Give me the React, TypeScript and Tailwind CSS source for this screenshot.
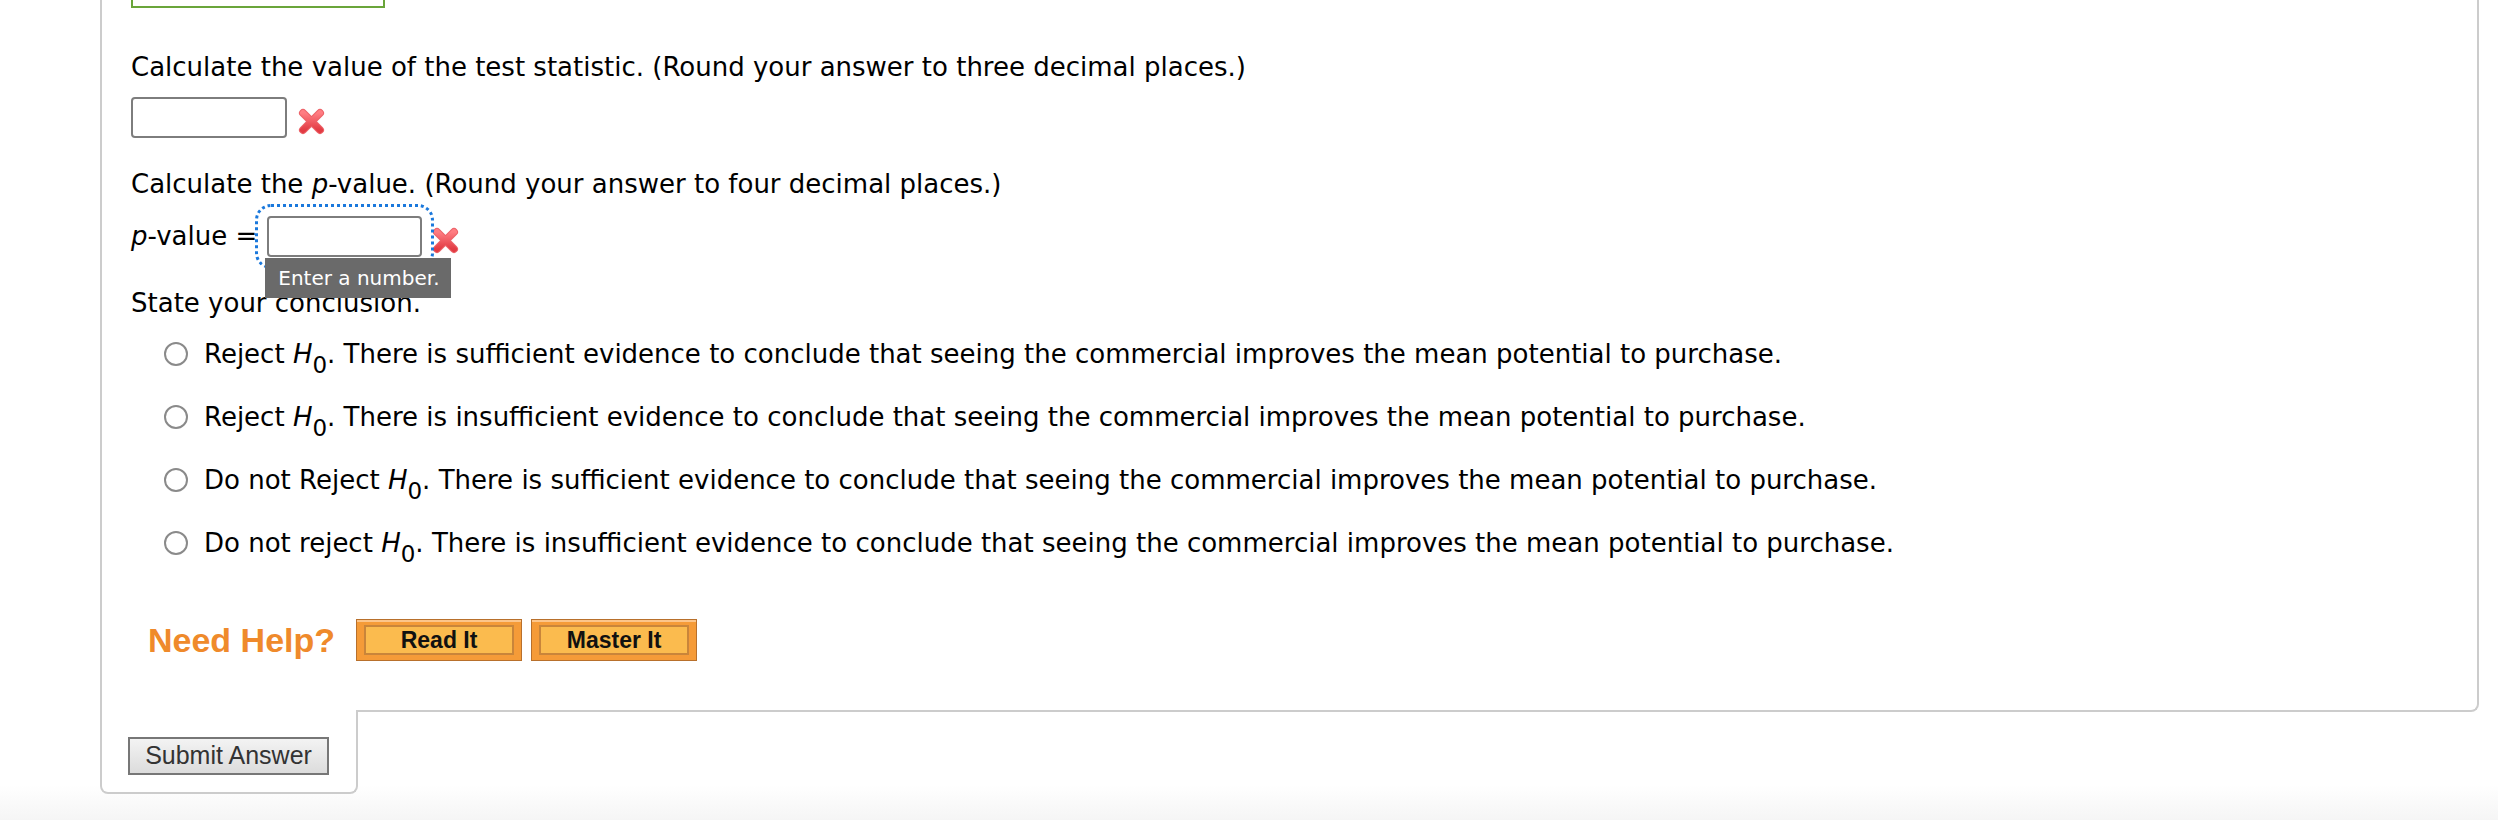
import React from "react";

const WrongMark = () => (
  <svg width="27" height="27" viewBox="0 0 27 27" className="shrink-0">
    <defs>
      <linearGradient id="xg" x1="0" y1="0" x2="0" y2="1">
        <stop offset="0" stopColor="#ff7d82" />
        <stop offset="1" stopColor="#e23b43" />
      </linearGradient>
    </defs>
    <path d="M5 5 L22 22 M22 5 L5 22" stroke="#e9464d" strokeWidth="8" strokeLinecap="round" opacity="0.85" />
    <path d="M5 5 L22 22 M22 5 L5 22" stroke="url(#xg)" strokeWidth="6" strokeLinecap="round" />
  </svg>
);

const H0 = () => (
  <>
    <i>H</i>
    <span className="align-[-10px] text-[23px] leading-[0]">0</span>
  </>
);

const HelpButton = ({ label }: { label: string }) => (
  <button className="h-[42px] w-[166px] border border-[#b8702c] bg-[#f59b38] px-[7px] py-[5px] shadow-[inset_0_2px_0_#fcc58a]">
    <span className="flex h-full w-full items-center justify-center border-2 border-[#c9853a] bg-[#fbbb4e] font-['Liberation_Sans',Arial,sans-serif] text-[23px] font-bold text-[#111]">
      {label}
    </span>
  </button>
);

const options = [
  { pre: "Reject", rest: "There is sufficient evidence to conclude that seeing the commercial improves the mean potential to purchase." },
  { pre: "Reject", rest: "There is insufficient evidence to conclude that seeing the commercial improves the mean potential to purchase." },
  { pre: "Do not Reject", rest: "There is sufficient evidence to conclude that seeing the commercial improves the mean potential to purchase." },
  { pre: "Do not reject", rest: "There is insufficient evidence to conclude that seeing the commercial improves the mean potential to purchase." },
];

export default function App() {
  return (
    <div className="h-[820px] w-full overflow-hidden bg-[linear-gradient(to_bottom,#ffffff_785px,#f5f5f5)] pl-[100px] font-['DejaVu_Sans',Verdana,sans-serif] text-[26px] text-black">
      {/* question panel */}
      <div className="w-[2379px] rounded-br-[8px] border-x-2 border-b-2 border-[#cccccc] bg-white pb-[49px] pl-[29px]">
        {/* tail of previous answer box */}
        <div className="h-[8px] w-[254px] border-x-2 border-b-2 border-[#6aa53a]" />

        <p className="mt-[41px] h-[36px] leading-[36px]">
          Calculate the value of the test statistic. (Round your answer to three decimal places.)
        </p>

        <div className="mt-[12px] flex items-start">
          <input readOnly className="h-[41px] w-[156px] rounded-[4px] border-2 border-[#7d7d7d] bg-white" />
          <div className="ml-[11px] mt-[11px]">
            <WrongMark />
          </div>
        </div>

        <p className="mt-[28px] h-[36px] leading-[36px]">
          Calculate the <i>p</i>-value. (Round your answer to four decimal places.)
        </p>

        <div className="mt-[14px] flex h-[41px] items-start">
          <span className="mt-[2px] leading-[36px]">
            <i>p</i>-value =
          </span>
          <div className="relative ml-[10px]">
            <input
              readOnly
              className="block h-[41px] w-[155px] rounded-[4px] border-2 border-[#7d7d7d] bg-white outline-[3px] outline-offset-[9px] outline-dotted outline-[#1a78dc]"
            />
            {/* tooltip */}
            <div className="absolute left-[-2px] top-[42px] z-10 flex h-[40px] w-[186px] items-center bg-[#6a6a6a] pl-[13px] text-[20px] text-white">
              Enter a number.
            </div>
          </div>
          <div className="ml-[10px] mt-[11px]">
            <WrongMark />
          </div>
        </div>

        <p className="mt-[28px] h-[36px] leading-[36px]">State your conclusion.</p>

        <div className="mt-[15px] flex flex-col gap-[27px]">
          {options.map((o, i) => (
            <label key={i} className="flex h-[36px] items-center gap-[16px] pl-[33px] leading-[36px]">
              <span className="h-[24px] w-[24px] shrink-0 rounded-full border-2 border-[#8a8a8a] bg-white" />
              <span className="h-[36px]">
                {o.pre} <H0 />. {o.rest}
              </span>
            </label>
          ))}
        </div>

        <div className="mt-[58px] flex h-[42px] items-center pl-[17px]">
          <span className="font-['Liberation_Sans',Arial,sans-serif] text-[34px] font-bold leading-[42px] text-[#ef8a2b]">
            Need Help?
          </span>
          <div className="ml-[21px] flex gap-[9px]">
            <HelpButton label="Read It" />
            <HelpButton label="Master It" />
          </div>
        </div>
      </div>

      {/* submit tab */}
      <div className="relative -mt-[2px] w-[258px] rounded-b-[8px] border-x-2 border-b-2 border-[#cccccc] bg-white pb-[17px] pl-[26px] pt-[26px]">
        <button className="h-[38px] w-[201px] border-2 border-[#777777] bg-[linear-gradient(to_bottom,#f3f3f3,#dcdcdc)] font-['Liberation_Sans',Arial,sans-serif] text-[25px] leading-none text-[#333333]">
          Submit Answer
        </button>
      </div>
    </div>
  );
}
